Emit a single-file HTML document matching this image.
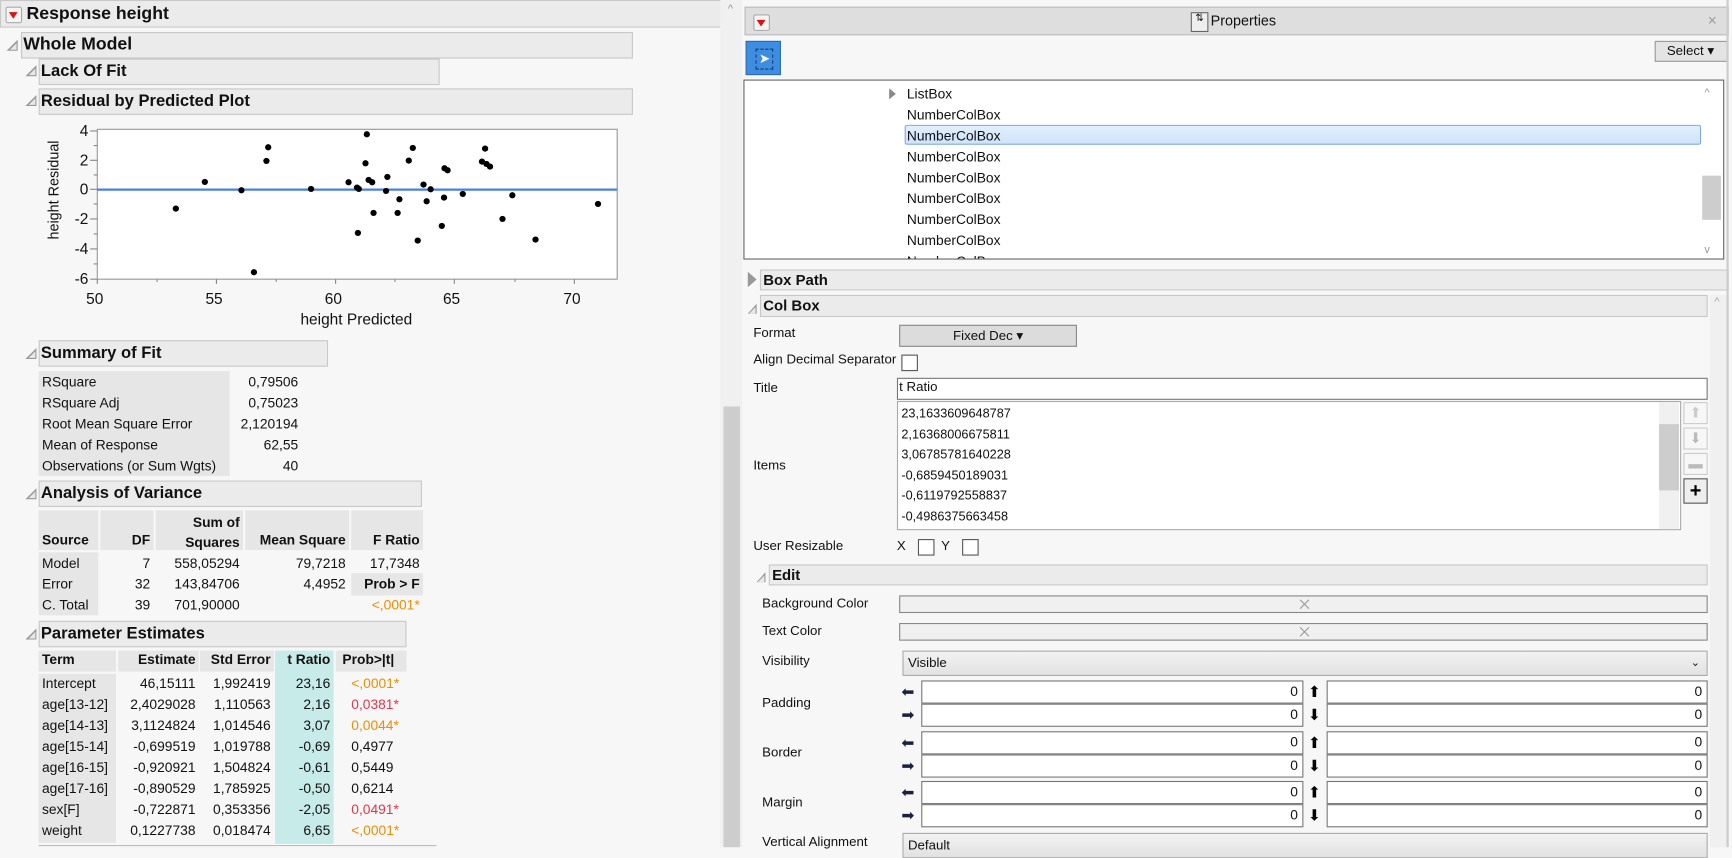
<!DOCTYPE html>
<html><head><meta charset="utf-8"><style>
html,body{margin:0;padding:0;width:1732px;height:847px;overflow:hidden;background:#f7f7f7}
#w{position:absolute;left:0;top:0;width:1568px;height:767px;transform:scale(1.10459);transform-origin:0 0;font-family:"Liberation Sans",sans-serif;font-size:12.5px;color:#111}
.a{position:absolute;white-space:nowrap}
.hd{position:absolute;background:#ebebeb;border:1px solid #c8c8c8;box-sizing:border-box;font-weight:bold;font-size:15px;line-height:21px;padding-left:1px}
.tri{position:absolute;width:0;height:0;border-left:10px solid transparent;border-bottom:10px solid #999}
.tri:after{content:"";position:absolute;left:-7px;top:3px;border-left:6px solid transparent;border-bottom:6px solid #e8e8e8}
.r{text-align:right}
.g{background:#e6e6e6}
.b{font-weight:bold}
.or{color:#f08c00}.rd{color:#e8334a}
.fld{position:absolute;background:#fff;border:1px solid #777;box-sizing:border-box;text-align:right;padding-right:4px;line-height:18px}
.arr{position:absolute;font-size:14px;color:#1a2040;line-height:14px}
</style></head><body><div id="w">
<div class="hd" style="left:0;top:1;width:655px;height:25px;font-size:16px;line-height:23px;padding-left:23px">Response height</div>
<div class="a" style="left:5px;top:6px;width:13px;height:13px;background:#f4f4f4;border:1px solid #aaa;border-radius:2px"><div style="position:absolute;left:2px;top:4px;border-left:4.5px solid transparent;border-right:4.5px solid transparent;border-top:6px solid #d11"></div></div>
<div class="tri" style="left:6px;top:36px"></div>
<div class="hd" style="left:19px;top:29px;width:554px;height:24px;font-size:16px">Whole Model</div>
<div class="tri" style="left:23px;top:59px"></div>
<div class="hd" style="left:35px;top:53px;width:363px;height:24px">Lack Of Fit</div>
<div class="tri" style="left:23px;top:86px"></div>
<div class="hd" style="left:35px;top:80px;width:538px;height:24px">Residual by Predicted Plot</div>
<svg class="a" style="left:0;top:0" width="633.5" height="380.1" viewBox="0 0 1568 1260" preserveAspectRatio="none">
<rect x="218" y="388" width="1165" height="450" fill="#fff" stroke="#999" stroke-width="1" vector-effect="non-scaling-stroke"/>
<g stroke="#888" stroke-width="1">
<path vector-effect="non-scaling-stroke" d="M218 838V852M485 838V852M752 838V852M1018 838V852M1287 838V852M352 838V846M619 838V846M885 838V846M1154 838V846M218 393H202M218 481H202M218 568H202M218 657H202M218 747H202M218 838H202M218 437H210M218 525H210M218 612H210M218 702H210M218 792H210"/>
</g>
<line x1="218" y1="569" x2="1383" y2="569" stroke="#4a7fe6" stroke-width="2" vector-effect="non-scaling-stroke"/>
<g fill="#000">
<ellipse cx="394" cy="626" rx="7" ry="9.3"/><ellipse cx="459" cy="546" rx="7" ry="9.3"/><ellipse cx="541" cy="571" rx="7" ry="9.3"/><ellipse cx="569" cy="817" rx="7" ry="9.3"/><ellipse cx="597" cy="483" rx="7" ry="9.3"/><ellipse cx="601" cy="442" rx="7" ry="9.3"/><ellipse cx="697" cy="567" rx="7" ry="9.3"/><ellipse cx="781" cy="547" rx="7" ry="9.3"/><ellipse cx="800" cy="563" rx="7" ry="9.3"/><ellipse cx="804" cy="567" rx="7" ry="9.3"/><ellipse cx="802" cy="699" rx="7" ry="9.3"/><ellipse cx="822" cy="403" rx="7" ry="9.3"/><ellipse cx="819" cy="490" rx="7" ry="9.3"/><ellipse cx="826" cy="540" rx="7" ry="9.3"/><ellipse cx="834" cy="547" rx="7" ry="9.3"/><ellipse cx="837" cy="639" rx="7" ry="9.3"/><ellipse cx="868" cy="531" rx="7" ry="9.3"/><ellipse cx="865" cy="573" rx="7" ry="9.3"/><ellipse cx="891" cy="639" rx="7" ry="9.3"/><ellipse cx="895" cy="598" rx="7" ry="9.3"/><ellipse cx="916" cy="482" rx="7" ry="9.3"/><ellipse cx="925" cy="444" rx="7" ry="9.3"/><ellipse cx="936" cy="722" rx="7" ry="9.3"/><ellipse cx="949" cy="554" rx="7" ry="9.3"/><ellipse cx="956" cy="604" rx="7" ry="9.3"/><ellipse cx="965" cy="568" rx="7" ry="9.3"/><ellipse cx="990" cy="678" rx="7" ry="9.3"/><ellipse cx="995" cy="593" rx="7" ry="9.3"/><ellipse cx="996" cy="505" rx="7" ry="9.3"/><ellipse cx="1003" cy="511" rx="7" ry="9.3"/><ellipse cx="1037" cy="582" rx="7" ry="9.3"/><ellipse cx="1080" cy="485" rx="7" ry="9.3"/><ellipse cx="1087" cy="446" rx="7" ry="9.3"/><ellipse cx="1090" cy="492" rx="7" ry="9.3"/><ellipse cx="1098" cy="500" rx="7" ry="9.3"/><ellipse cx="1126" cy="657" rx="7" ry="9.3"/><ellipse cx="1148" cy="586" rx="7" ry="9.3"/><ellipse cx="1200" cy="719" rx="7" ry="9.3"/><ellipse cx="1340" cy="612" rx="7" ry="9.3"/>
</g></svg>
<div class="a r" style="left:50px;top:110px;width:30px;font-size:14px">4</div>
<div class="a r" style="left:50px;top:137px;width:30px;font-size:14px">2</div>
<div class="a r" style="left:50px;top:163px;width:30px;font-size:14px">0</div>
<div class="a r" style="left:50px;top:190px;width:30px;font-size:14px">-2</div>
<div class="a r" style="left:50px;top:217px;width:30px;font-size:14px">-4</div>
<div class="a r" style="left:50px;top:244px;width:30px;font-size:14px">-6</div>
<div class="a" style="left:78px;top:262px;font-size:14px">50</div>
<div class="a" style="left:186px;top:262px;font-size:14px">55</div>
<div class="a" style="left:294px;top:262px;font-size:14px">60</div>
<div class="a" style="left:401px;top:262px;font-size:14px">65</div>
<div class="a" style="left:510px;top:262px;font-size:14px">70</div>
<div class="a" style="left:272px;top:281px;font-size:14px">height Predicted</div>
<div class="a" style="left:1px;top:164px;width:96px;text-align:center;font-size:13px;transform:rotate(-90deg);transform-origin:48px 8px">height Residual</div>

<div class="tri" style="left:23px;top:315px"></div>
<div class="hd" style="left:35px;top:308px;width:262px;height:24px">Summary of Fit</div>
<div class="a g" style="left:35px;top:336px;width:173px;height:95px"></div>
<div class="a" style="left:38px;top:337px;line-height:19px">RSquare<br>RSquare Adj<br>Root Mean Square Error<br>Mean of Response<br>Observations (or Sum Wgts)</div>
<div class="a r" style="left:200px;top:337px;width:70px;line-height:19px">0,79506<br>0,75023<br>2,120194<br>62,55<br>40</div>

<div class="tri" style="left:23px;top:442px"></div>
<div class="hd" style="left:35px;top:435px;width:347px;height:24px">Analysis of Variance</div>
<div class="a g" style="left:35px;top:462px;width:54px;height:36px"></div>
<div class="a g" style="left:91px;top:462px;width:48px;height:36px"></div>
<div class="a g" style="left:141px;top:462px;width:79px;height:36px"></div>
<div class="a g" style="left:222px;top:462px;width:94px;height:36px"></div>
<div class="a g" style="left:318px;top:462px;width:65px;height:36px"></div>
<div class="a g" style="left:35px;top:500px;width:54px;height:57px"></div>
<div class="a g" style="left:318px;top:519px;width:65px;height:20px"></div>
<div class="a b" style="left:38px;top:482px">Source</div>
<div class="a b r" style="left:91px;top:482px;width:45px">DF</div>
<div class="a b r" style="left:141px;top:464px;width:76px;line-height:18px">Sum of<br>Squares</div>
<div class="a b r" style="left:222px;top:482px;width:91px">Mean Square</div>
<div class="a b r" style="left:318px;top:482px;width:62px">F Ratio</div>
<div class="a" style="left:38px;top:501px;line-height:19px">Model<br>Error<br>C. Total</div>
<div class="a r" style="left:91px;top:501px;width:45px;line-height:19px">7<br>32<br>39</div>
<div class="a r" style="left:141px;top:501px;width:76px;line-height:19px">558,05294<br>143,84706<br>701,90000</div>
<div class="a r" style="left:222px;top:501px;width:91px;line-height:19px">79,7218<br>4,4952</div>
<div class="a r" style="left:318px;top:501px;width:62px;line-height:19px">17,7348<br><b>Prob &gt; F</b><br><span class="or">&lt;,0001*</span></div>

<div class="tri" style="left:23px;top:569px"></div>
<div class="hd" style="left:35px;top:562px;width:333px;height:24px">Parameter Estimates</div>
<div class="a g" style="left:35px;top:589px;width:70px;height:19px"></div>
<div class="a g" style="left:107px;top:589px;width:73px;height:19px"></div>
<div class="a g" style="left:181px;top:589px;width:67px;height:19px"></div>
<div class="a g" style="left:304px;top:589px;width:64px;height:19px"></div>
<div class="a" style="left:249px;top:589px;width:53px;height:175px;background:#c6ebe8"></div>
<div class="a g" style="left:35px;top:610px;width:70px;height:153px"></div>
<div class="a b" style="left:38px;top:590px">Term</div>
<div class="a b r" style="left:107px;top:590px;width:70px">Estimate</div>
<div class="a b r" style="left:181px;top:590px;width:64px">Std Error</div>
<div class="a b r" style="left:249px;top:590px;width:50px">t Ratio</div>
<div class="a b" style="left:310px;top:590px">Prob&gt;|t|</div>
<div class="a" style="left:38px;top:610px;line-height:19px">Intercept<br>age[13-12]<br>age[14-13]<br>age[15-14]<br>age[16-15]<br>age[17-16]<br>sex[F]<br>weight</div>
<div class="a r" style="left:100px;top:610px;width:77px;line-height:19px">46,15111<br>2,4029028<br>3,1124824<br>-0,699519<br>-0,920921<br>-0,890529<br>-0,722871<br>0,1227738</div>
<div class="a r" style="left:181px;top:610px;width:64px;line-height:19px">1,992419<br>1,110563<br>1,014546<br>1,019788<br>1,504824<br>1,785925<br>0,353356<br>0,018474</div>
<div class="a r" style="left:249px;top:610px;width:50px;line-height:19px">23,16<br>2,16<br>3,07<br>-0,69<br>-0,61<br>-0,50<br>-2,05<br>6,65</div>
<div class="a" style="left:318px;top:610px;line-height:19px"><span class="or">&lt;,0001*</span><br><span class="rd">0,0381*</span><br><span class="or">0,0044*</span><br>0,4977<br>0,5449<br>0,6214<br><span class="rd">0,0491*</span><br><span class="or">&lt;,0001*</span></div>
<div class="a" style="left:35px;top:765px;width:360px;height:1px;background:#bbb"></div>

<div class="a" style="left:652px;top:0;width:20px;height:767px;background:#f0f0f0"></div>
<div class="a" style="left:655px;top:368px;width:15px;height:399px;background:#cdcdcd"></div>
<div class="a" style="left:659px;top:3px;font-size:10px;color:#999">^</div>

<div class="a" style="left:674px;top:6px;width:891px;height:26px;background:#dedede;border:1px solid #bbb;box-sizing:border-box"></div>
<div class="a" style="left:682px;top:13px;width:13px;height:13px;background:#f4f4f4;border:1px solid #aaa;border-radius:2px"><div style="position:absolute;left:2px;top:4px;border-left:4.5px solid transparent;border-right:4.5px solid transparent;border-top:6px solid #d11"></div></div>
<div class="a" style="left:1078px;top:11px;width:14px;height:16px;border:1px solid #666;background:#eee;font-size:9px;line-height:8px;text-align:center">⇅</div>
<div class="a" style="left:1096px;top:11px;font-size:13px">Properties</div>
<div class="a" style="left:1546px;top:10px;font-size:14px;color:#999">×</div>
<div class="a" style="left:675px;top:37px;width:32px;height:31px;background:#3d8de0;border:1px solid #2a6cb5;box-sizing:border-box"><div style="position:absolute;left:8px;top:6px;width:14px;height:17px;border:1px dashed #1a3c80"></div><div style="position:absolute;left:11px;top:8px;font-size:12px;color:#fff">➤</div></div>
<div class="a" style="left:1498px;top:37px;width:66px;height:19px;background:#e4e4e4;border:1px solid #999;box-sizing:border-box;font-size:12px;line-height:17px;padding-left:10px">Select ▾</div>
<div class="a" style="left:673px;top:72px;width:888px;height:163px;background:#fff;border:1px solid #666;box-sizing:border-box;overflow:hidden">
<div class="a" style="left:867px;top:86px;width:17px;height:40px;background:#cdcdcd"></div>
<div class="a" style="left:869px;top:6px;font-size:10px;color:#999">^</div>
<div class="a" style="left:869px;top:148px;font-size:10px;color:#999">v</div>
<div class="a" style="left:145px;top:40px;width:721px;height:18px;background:linear-gradient(#e2effd,#cfe3fa);border:1px solid #7fa8e0;border-radius:2px;box-sizing:border-box"></div>
<div class="a" style="left:131px;top:7px;border-top:5px solid transparent;border-bottom:5px solid transparent;border-left:6px solid #888"></div>
<div class="a" style="left:147px;top:3px;line-height:19px;font-size:12.5px">ListBox<br>NumberColBox<br>NumberColBox<br>NumberColBox<br>NumberColBox<br>NumberColBox<br>NumberColBox<br>NumberColBox<br>NumberColBox</div>
</div>
<div class="a" style="left:677px;top:246px;border-top:7px solid transparent;border-bottom:7px solid transparent;border-left:8px solid #999"></div>
<div class="hd" style="left:688px;top:244px;width:877px;height:19px;line-height:17px;font-size:13.5px;padding-left:2px">Box Path</div>
<div class="tri" style="left:677px;top:275px;border-left-width:8px;border-bottom-width:9px"></div>
<div class="hd" style="left:688px;top:267px;width:858px;height:20px;line-height:18px;font-size:13.5px;padding-left:2px">Col Box</div>
<div class="a" style="left:1548px;top:267px;width:17px;height:500px;background:#f0f0f0"></div>
<div class="a" style="left:1552px;top:268px;font-size:10px;color:#aaa">^</div>
<div class="a" style="left:1563px;top:0;width:2px;height:767px;background:#ccc"></div>
<div class="a" style="left:682px;top:294px;font-size:12px">Format</div>
<div class="a" style="left:814px;top:294px;width:161px;height:20px;background:#dcdcdc;border:1px solid #888;box-sizing:border-box;text-align:center;font-size:12px;line-height:18px">Fixed Dec ▾</div>
<div class="a" style="left:682px;top:318px;font-size:12px">Align Decimal Separator</div>
<div class="a" style="left:816px;top:321px;width:15px;height:15px;background:#fff;border:1px solid #555;box-sizing:border-box"></div>
<div class="a" style="left:682px;top:344px;font-size:12px">Title</div>
<div class="a" style="left:812px;top:342px;width:734px;height:20px;background:#fff;border:1px solid #777;box-sizing:border-box;font-size:12px;line-height:15px;padding-left:1px">t Ratio</div>
<div class="a" style="left:682px;top:414px;font-size:12px">Items</div>
<div class="a" style="left:812px;top:363px;width:710px;height:117px;background:#fff;border:1px solid #aaa;box-sizing:border-box">
<div class="a" style="left:3px;top:2px;font-size:11.5px;line-height:18.5px">23,1633609648787<br>2,16368006675811<br>3,06785781640228<br>-0,6859450189031<br>-0,6119792558837<br>-0,4986375663458</div>
<div class="a" style="left:689px;top:0;width:18px;height:115px;background:#f0f0f0"></div>
<div class="a" style="left:689px;top:20px;width:18px;height:60px;background:#cdcdcd"></div>
</div>
<div class="a" style="left:1524px;top:364px;width:22px;height:20px;border:1px solid #ccc;box-sizing:border-box;text-align:center;color:#ccc;font-size:13px;line-height:18px">⬆</div>
<div class="a" style="left:1524px;top:387px;width:22px;height:20px;border:1px solid #ccc;box-sizing:border-box;text-align:center;color:#bbb;font-size:13px;line-height:18px">⬇</div>
<div class="a" style="left:1524px;top:410px;width:22px;height:20px;border:1px solid #ccc;box-sizing:border-box;text-align:center;color:#bbb;font-size:13px;line-height:18px">▬</div>
<div class="a" style="left:1524px;top:433px;width:22px;height:23px;border:1px solid #555;box-sizing:border-box;text-align:center;color:#000;font-size:18px;font-weight:bold;line-height:21px;background:#eee">+</div>
<div class="a" style="left:682px;top:487px;font-size:12px">User Resizable</div>
<div class="a" style="left:812px;top:487px;font-size:12px">X</div>
<div class="a" style="left:831px;top:488px;width:15px;height:15px;background:#fff;border:1px solid #555;box-sizing:border-box"></div>
<div class="a" style="left:852px;top:487px;font-size:12px">Y</div>
<div class="a" style="left:871px;top:488px;width:15px;height:15px;background:#fff;border:1px solid #555;box-sizing:border-box"></div>
<div class="tri" style="left:685px;top:518px;border-left-width:8px;border-bottom-width:9px"></div>
<div class="hd" style="left:696px;top:511px;width:850px;height:19px;line-height:17px;font-size:13.5px;padding-left:2px">Edit</div>
<div class="a" style="left:690px;top:539px;font-size:12px">Background Color</div>
<div class="a" style="left:814px;top:539px;width:732px;height:16px;background:#f0f0f0;border:1px solid #888;box-sizing:border-box"><svg style="position:absolute;left:361px;top:2px" width="10" height="10"><path d="M1 1L9 9M9 1L1 9" stroke="#999" stroke-width="1"/></svg></div>
<div class="a" style="left:690px;top:564px;font-size:12px">Text Color</div>
<div class="a" style="left:814px;top:564px;width:732px;height:16px;background:#f0f0f0;border:1px solid #888;box-sizing:border-box"><svg style="position:absolute;left:361px;top:2px" width="10" height="10"><path d="M1 1L9 9M9 1L1 9" stroke="#999" stroke-width="1"/></svg></div>
<div class="a" style="left:690px;top:591px;font-size:12px">Visibility</div>
<div class="a" style="left:817px;top:589px;width:729px;height:23px;background:linear-gradient(#f2f2f2,#e2e2e2);border:1px solid #aaa;box-sizing:border-box;font-size:12px;line-height:21px;padding-left:4px">Visible<span style="position:absolute;right:6px;font-size:10px">⌄</span></div>
<div class="a" style="left:690px;top:629px;font-size:12px">Padding</div>
<div class="a" style="left:690px;top:674px;font-size:12px">Border</div>
<div class="a" style="left:690px;top:719px;font-size:12px">Margin</div>
<div class="a" style="left:690px;top:755px;font-size:12px">Vertical Alignment</div>
<div class="a" style="left:817px;top:754px;width:729px;height:23px;background:linear-gradient(#f2f2f2,#e2e2e2);border:1px solid #aaa;box-sizing:border-box;font-size:12px;line-height:21px;padding-left:4px">Default</div>

<div class="fld" style="left:834px;top:616px;width:346px;height:21px">0</div><div class="fld" style="left:1201px;top:616px;width:345px;height:21px">0</div>
<div class="fld" style="left:834px;top:637px;width:346px;height:21px">0</div><div class="fld" style="left:1201px;top:637px;width:345px;height:21px">0</div>
<div class="fld" style="left:834px;top:662px;width:346px;height:21px">0</div><div class="fld" style="left:1201px;top:662px;width:345px;height:21px">0</div>
<div class="fld" style="left:834px;top:683px;width:346px;height:21px">0</div><div class="fld" style="left:1201px;top:683px;width:345px;height:21px">0</div>
<div class="fld" style="left:834px;top:707px;width:346px;height:21px">0</div><div class="fld" style="left:1201px;top:707px;width:345px;height:21px">0</div>
<div class="fld" style="left:834px;top:728px;width:346px;height:21px">0</div><div class="fld" style="left:1201px;top:728px;width:345px;height:21px">0</div>
<div class="arr" style="left:816px;top:619px">⬅</div><div class="arr" style="left:816px;top:640px">➡</div>
<div class="arr" style="left:816px;top:665px">⬅</div><div class="arr" style="left:816px;top:686px">➡</div>
<div class="arr" style="left:816px;top:710px">⬅</div><div class="arr" style="left:816px;top:731px">➡</div>
<div class="arr" style="left:1184px;top:619px;color:#000">⬆</div><div class="arr" style="left:1184px;top:640px;color:#000">⬇</div>
<div class="arr" style="left:1184px;top:665px;color:#000">⬆</div><div class="arr" style="left:1184px;top:686px;color:#000">⬇</div>
<div class="arr" style="left:1184px;top:710px;color:#000">⬆</div><div class="arr" style="left:1184px;top:731px;color:#000">⬇</div>
</div></body></html>
